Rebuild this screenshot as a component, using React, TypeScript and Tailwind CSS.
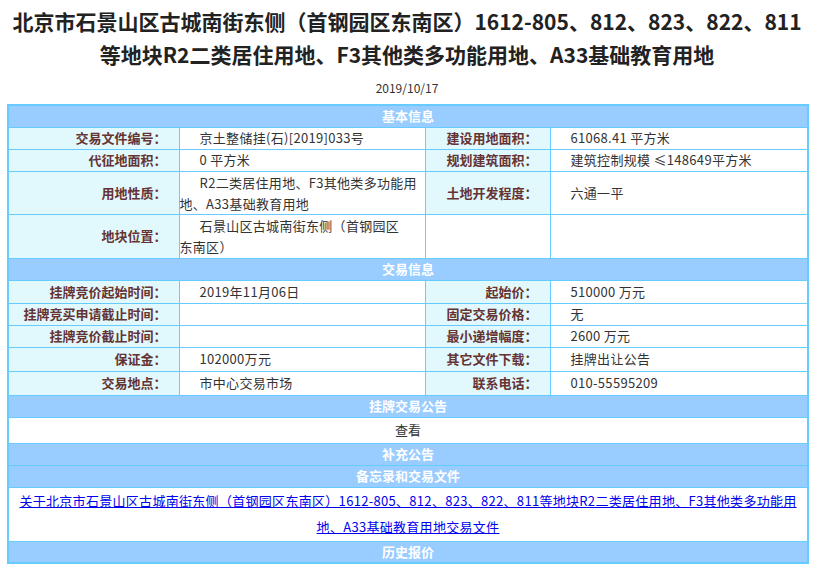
import React from "react";

const L = "bg-[#e1f8fd] text-right font-bold text-[#663333] pr-3 border border-[#66ccff]";
const V = "bg-white text-left pl-5 border border-[#66ccff] text-[#333] tracking-[0.3px]";
const H = "bg-[#99ccff] text-center font-bold text-white border border-[#66ccff] h-[22px]";

function Row({ a, b, c, d, h = 22 }: { a: string; b: React.ReactNode; c: string; d: React.ReactNode; h?: number }) {
  return (
    <tr style={{ height: h }}>
      <td className={L}>{a}</td>
      <td className={V}>{b}</td>
      <td className={L}>{c}</td>
      <td className={V}>{d}</td>
    </tr>
  );
}

export default function App() {
  return (
    <div className="w-[814px] h-[571px] bg-white overflow-hidden text-[13px] leading-[20px]" style={{ fontFamily: '"Noto Sans CJK SC", sans-serif' }}>
      <h1 className="text-center font-bold text-[21px] leading-[33px] text-[#222] pt-[5px] px-2">
        北京市石景山区古城南街东侧（首钢园区东南区）1612-805、812、823、822、811等地块R2二类居住用地、F3其他类多功能用地、A33基础教育用地
      </h1>
      <div className="text-center text-[12px] leading-[16px] mt-[9px] mb-[8px] text-[#333]">2019/10/17</div>
      <table className="ml-[7px] w-[800px] border-collapse border-2 border-[#66ccff] table-fixed">
        <colgroup>
          <col style={{ width: 171 }} />
          <col style={{ width: 246 }} />
          <col style={{ width: 125 }} />
          <col style={{ width: 258 }} />
        </colgroup>
        <tbody>
          <tr><td colSpan={4} className={H}>基本信息</td></tr>
          <Row a="交易文件编号：" b="京土整储挂(石)[2019]033号" c="建设用地面积：" d="61068.41 平方米" />
          <Row a="代征地面积：" b="0 平方米" c="规划建筑面积：" d="建筑控制规模 ≤148649平方米" />
          <tr style={{ height: 43 }}>
            <td className={L}>用地性质：</td>
            <td className="bg-white border border-[#66ccff] text-[#333] leading-[21px] tracking-[0.3px]">&emsp;&ensp;R2二类居住用地、F3其他类多功能用地、A33基础教育用地</td>
            <td className={L}>土地开发程度：</td>
            <td className={V}>六通一平</td>
          </tr>
          <tr style={{ height: 44 }}>
            <td className={L}>地块位置：</td>
            <td className="bg-white border border-[#66ccff] text-[#333] leading-[21px] tracking-[0.3px]">&emsp;&ensp;石景山区古城南街东侧（首钢园区<br />东南区）</td>
            <td className="bg-white border border-[#66ccff]"></td>
            <td className="bg-white border border-[#66ccff]"></td>
          </tr>
          <tr><td colSpan={4} className={H}>交易信息</td></tr>
          <Row a="挂牌竞价起始时间：" b="2019年11月06日" c="起始价：" d="510000 万元" h={23} />
          <Row a="挂牌竞买申请截止时间：" b="" c="固定交易价格：" d="无" />
          <Row a="挂牌竞价截止时间：" b="" c="最小递增幅度：" d="2600 万元" />
          <Row a="保证金：" b="102000万元" c="其它文件下载：" d="挂牌出让公告" h={24} />
          <Row a="交易地点：" b="市中心交易市场" c="联系电话：" d="010-55595209" h={24} />
          <tr><td colSpan={4} className={H}>挂牌交易公告</td></tr>
          <tr style={{ height: 26 }}><td colSpan={4} className="bg-white text-center border border-[#66ccff] text-[#333]">查看</td></tr>
          <tr><td colSpan={4} className={H}>补充公告</td></tr>
          <tr><td colSpan={4} className={H}>备忘录和交易文件</td></tr>
          <tr style={{ height: 54 }}>
            <td colSpan={4} className="bg-white text-center border border-[#66ccff] leading-[26px] tracking-[0.3px]">
              <a href="#" className="text-[#0000ee] underline">关于北京市石景山区古城南街东侧（首钢园区东南区）1612-805、812、823、822、811等地块R2二类居住用地、F3其他类多功能用<br />地、A33基础教育用地交易文件</a>
            </td>
          </tr>
          <tr><td colSpan={4} className={H}>历史报价</td></tr>
        </tbody>
      </table>
    </div>
  );
}
